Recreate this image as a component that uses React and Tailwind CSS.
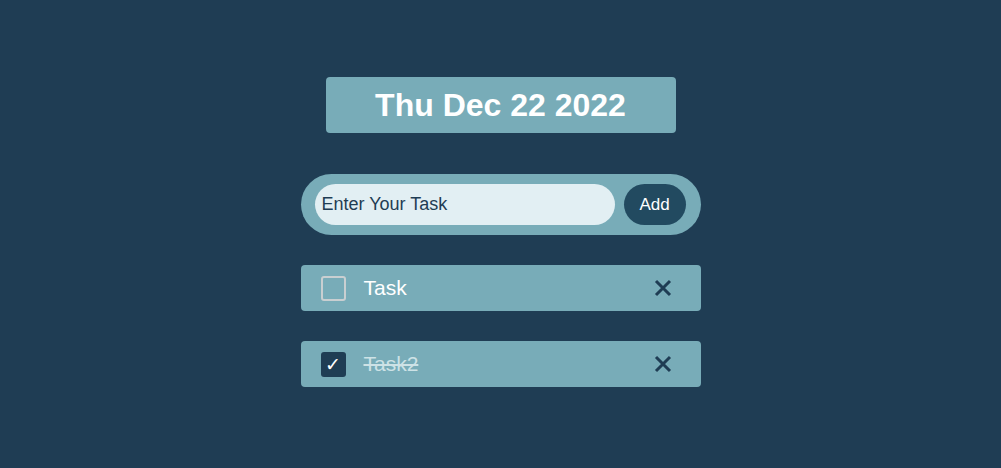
import { useState } from 'react';

const font = { fontFamily: '"Liberation Sans", Arial, sans-serif' }

const CloseIcon = () => (
  <svg width="18" height="18" viewBox="0 0 18 18" className="text-[#1f3d54]">
    <path d="M2 2 L16 16 M16 2 L2 16" stroke="currentColor" strokeWidth="3" strokeLinecap="butt" />
  </svg>
)

const TaskRow = ({ task, onToggle }) => (
  <div className="w-[400px] h-[46px] bg-[#78acb8] rounded-[4px] flex items-center pl-5 pr-[29px]">
    <button
      onClick={onToggle}
      className={`w-[25px] h-[25px] rounded-[3px] flex items-center justify-center shrink-0 ${task.done ? "bg-[#1f3d54]" : "border-2 border-[#c9cfd1]"}`}
    >
      {task.done && <span className="text-white text-[19px] leading-none">✓</span>}
    </button>
    <span className={`ml-[18px] text-[21px] flex-1 ${task.done ? "line-through text-[#cde2e6]" : "text-white"}`}>
      {task.name}
    </span>
    <CloseIcon />
  </div>
)

const App = () => {
  const [tasks, setTasks] = useState([
    { name: "Task", done: false },
    { name: "Task2", done: true },
  ])

  const toggle = (i) => {
    setTasks(prev => prev.map((t, idx) => idx === i ? { ...t, done: !t.done } : t))
  }

  return (
    <div className="w-full h-[468px] bg-[#1f3d54] flex flex-col items-center pt-[77px]" style={font}>
      {/* DATE */}
      <div className="w-[350px] h-[56px] bg-[#78acb8] rounded-[4px] flex items-center justify-center">
        <h1 className="text-white text-[32px] font-bold">Thu Dec 22 2022</h1>
      </div>
      {/* FORM */}
      <div className="mt-[41px] w-[400px] h-[61px] bg-[#78acb8] rounded-full flex items-center pl-[14px] pr-[15px]">
        <input
          className="w-[300px] h-[41px] bg-[#e2eff3] rounded-full pl-[7px] text-[18px] text-[#1f3d54] placeholder:text-[#1f3d54] outline-none"
          placeholder="Enter Your Task"
        />
        <button className="ml-[9px] w-[62px] h-[41px] bg-[#224a60] rounded-full text-white text-[17px]">Add</button>
      </div>
      {/* TASKS */}
      <div className="mt-[30px] flex flex-col gap-[30px]">
        {tasks.map((t, i) => (
          <TaskRow key={i} task={t} onToggle={() => toggle(i)} />
        ))}
      </div>
    </div>
  )
}

export default App
